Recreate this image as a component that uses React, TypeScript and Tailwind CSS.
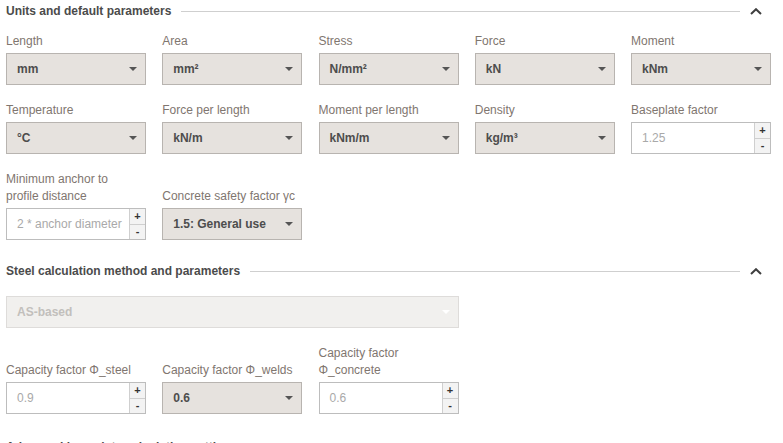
import React from "react";

const font = { fontFamily: "'Liberation Sans', Arial, sans-serif" };

function Chevron({ up = true }: { up?: boolean }) {
  return (
    <svg width="12" height="7" viewBox="0 0 12 7" className="block">
      <polyline
        points={up ? "1,6 6,1.2 11,6" : "1,1 6,5.8 11,1"}
        fill="none"
        stroke="#3f3f3f"
        strokeWidth="2"
      />
    </svg>
  );
}

function Heading({ title, up = true }: { title: string; up?: boolean }) {
  return (
    <div className="flex items-center h-[22px] pl-[6px] pr-[11px]">
      <span className="text-[12px] font-bold text-[#4b4b4b] whitespace-nowrap">{title}</span>
      <div className="flex-1 ml-[10px] h-px bg-[#cfcfcf]" />
      <div className="w-[32px] flex justify-center">
        <Chevron up={up} />
      </div>
    </div>
  );
}

function Caret({ color = "#555" }: { color?: string }) {
  return (
    <svg width="8" height="4" viewBox="0 0 8 4" className="block">
      <polygon points="0,0 8,0 4,4" fill={color} />
    </svg>
  );
}

function Select({ value, disabled = false }: { value: string; disabled?: boolean }) {
  return (
    <div
      className={
        disabled
          ? "h-[32px] border border-[#dedcda] bg-[#f1f0ee] flex items-center justify-between pl-[10px] pr-[8px] text-[12px] font-bold text-[#c2bfbc]"
          : "h-[32px] border border-[#b8b4b0] bg-[#e6e2de] flex items-center justify-between pl-[10px] pr-[8px] text-[12px] font-bold text-[#4d4d4d]"
      }
    >
      <span>{value}</span>
      <Caret color={disabled ? "#ffffff" : "#555555"} />
    </div>
  );
}

function Stepper({ value }: { value: string }) {
  return (
    <div className="h-[32px] border border-[#bdbdbd] bg-white flex">
      <div className="flex-1 flex items-center pl-[10px] text-[12px] text-[#a9a9a9] whitespace-nowrap overflow-hidden">
        {value}
      </div>
      <div className="w-[16px] border-l border-[#cfcfcf] bg-[#f3f3f3] flex flex-col">
        <div className="flex-1 flex items-center justify-center text-[11px] font-bold leading-none text-[#333]">+</div>
        <div className="flex-1 border-t border-[#cfcfcf] flex items-center justify-center text-[11px] font-bold leading-none text-[#333]">-</div>
      </div>
    </div>
  );
}

function Field({ label, children, span3 = false }: { label: React.ReactNode; children: React.ReactNode; span3?: boolean }) {
  return (
    <div className={span3 ? "col-span-3 flex flex-col" : "flex flex-col"}>
      {label && <div className="text-[12px] leading-[17px] text-[#7f766f] mb-[3.5px]">{label}</div>}
      {children}
    </div>
  );
}

export default function App() {
  return (
    <div className="w-[783px] h-[443px] overflow-hidden bg-white" style={font}>
      <Heading title="Units and default parameters" />
      <div className="pl-[6px] pt-[10.5px] grid grid-cols-[repeat(5,140px)] gap-x-[16.25px] gap-y-[16.5px] items-end">
        <Field label="Length"><Select value="mm" /></Field>
        <Field label="Area"><Select value="mm²" /></Field>
        <Field label="Stress"><Select value="N/mm²" /></Field>
        <Field label="Force"><Select value="kN" /></Field>
        <Field label="Moment"><Select value="kNm" /></Field>
        <Field label="Temperature"><Select value="°C" /></Field>
        <Field label="Force per length"><Select value="kN/m" /></Field>
        <Field label="Moment per length"><Select value="kNm/m" /></Field>
        <Field label="Density"><Select value="kg/m³" /></Field>
        <Field label="Baseplate factor"><Stepper value="1.25" /></Field>
        <Field label={<>Minimum anchor to<br />profile distance</>}><Stepper value="2 * anchor diameter" /></Field>
        <Field label="Concrete safety factor γc"><Select value="1.5: General use" /></Field>
      </div>

      <div className="mt-[20px]">
        <Heading title="Steel calculation method and parameters" />
      </div>
      <div className="pl-[6px] pt-[14px] grid grid-cols-[repeat(5,140px)] gap-x-[16.25px] gap-y-[16.5px] items-end">
        <Field label="" span3><Select value="AS-based" disabled /></Field>
        <div className="col-span-2" />
        <Field label="Capacity factor Φ_steel"><Stepper value="0.9" /></Field>
        <Field label="Capacity factor Φ_welds"><Select value="0.6" /></Field>
        <Field label={<>Capacity factor<br />Φ_concrete</>}><Stepper value="0.6" /></Field>
      </div>

      <div className="mt-[21.5px]">
        <Heading title="Advanced baseplate calculation settings" up={false} />
      </div>
    </div>
  );
}
